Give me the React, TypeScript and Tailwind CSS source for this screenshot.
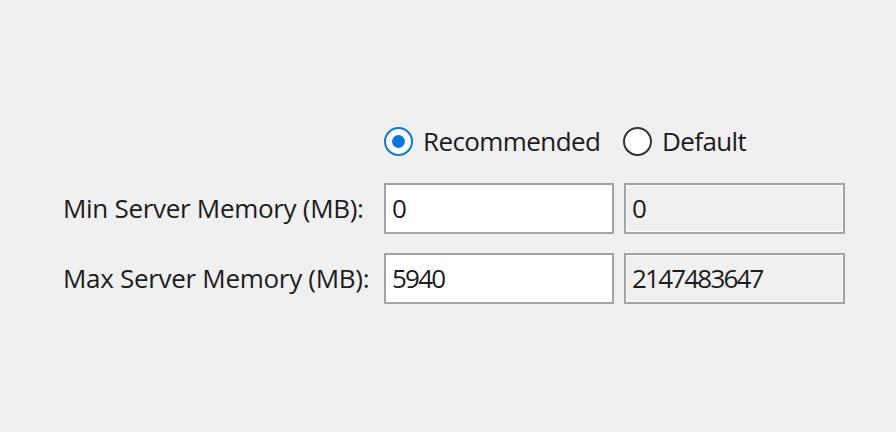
import React from "react";

function Radio({ checked, label }: { checked: boolean; label: string }) {
  return (
    <div className="flex items-center gap-[10px]">
      {checked ? (
        <div className="w-[29px] h-[29px] rounded-full border-[2.5px] border-[#0a78d7] bg-white flex items-center justify-center">
          <div className="w-[13px] h-[13px] rounded-full bg-[#0a78d7]" />
        </div>
      ) : (
        <div className="w-[29px] h-[29px] rounded-full border-[2.5px] border-[#333333] bg-white" />
      )}
      <span className="tracking-[-0.6px]">{label}</span>
    </div>
  );
}

function Box({ value, disabled }: { value: string; disabled?: boolean }) {
  return (
    <div
      className={
        disabled
          ? "h-[51px] border-2 border-[#a3a3a3] bg-[#f0f0f0] shadow-[inset_0_0_0_1px_#fbfbfb] flex items-center px-[6px]"
          : "h-[51px] border-2 border-[#a3a3a3] bg-white flex items-center px-[6px]"
      }
    >
      <span className="tracking-[-1.8px]">{value}</span>
    </div>
  );
}

export default function App() {
  return (
    <div
      className="w-[896px] h-[432px] bg-[#f0f0f0] text-[#1c1c1c] text-[26px] pt-[126px] pl-[63px]"
      style={{ fontFamily: '"Segoe UI", "Open Sans", "Noto Sans", sans-serif' }}
    >
      <div className="grid grid-cols-[321px_230px_231px]">
        <div />
        <div className="h-[31px] flex items-center">
          <Radio checked label="Recommended" />
        </div>
        <div className="h-[31px] flex items-center pl-[9px]">
          <Radio checked={false} label="Default" />
        </div>

        <div className="h-[26px] col-span-3" />

        <div className="h-[51px] flex items-center tracking-[-0.3px]">Min Server Memory (MB):</div>
        <Box value="0" />
        <div className="pl-[10px]">
          <Box value="0" disabled />
        </div>

        <div className="h-[19px] col-span-3" />

        <div className="h-[51px] flex items-center tracking-[-0.3px]">Max Server Memory (MB):</div>
        <Box value="5940" />
        <div className="pl-[10px]">
          <Box value="2147483647" disabled />
        </div>
      </div>
    </div>
  );
}
